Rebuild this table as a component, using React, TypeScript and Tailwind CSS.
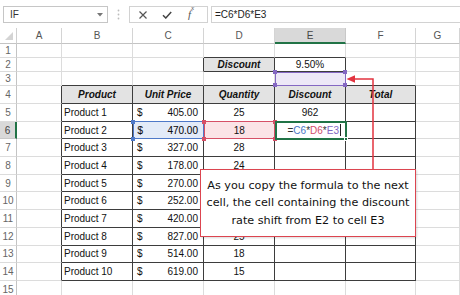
import React from "react";

const HDR = ["", "A", "B", "C", "D", "E", "F", "G"];
const prices = ["405.00", "470.00", "327.00", "178.00", "270.00", "252.00", "420.00", "827.00", "514.00", "619.00"];
const qty = ["25", "18", "28", "24", "", "", "", "25", "18", "15"];

const R_DARK = "border-r-[#3d3d3d]";
const R_LIGHT = "border-r-[#dcdcdc]";
const B_DARK = "border-b-[#3d3d3d]";
const B_LIGHT = "border-b-[#dcdcdc]";

function darkRight(r: number, c: number) {
  return (r >= 4 && r <= 14 && c >= 1 && c <= 6) || (r === 2 && c >= 3 && c <= 5);
}
function darkBottom(r: number, c: number) {
  return (r >= 3 && r <= 14 && c >= 2 && c <= 6) || ((r === 1 || r === 2) && (c === 4 || c === 5));
}

function cellContent(r: number, c: number): React.ReactNode {
  if (r === 2 && c === 4) return <span className="w-full text-center font-bold italic">Discount</span>;
  if (r === 2 && c === 5) return <span className="w-full text-center">9.50%</span>;
  if (r === 4) {
    const h: Record<number, string> = { 2: "Product", 3: "Unit Price", 4: "Quantity", 5: "Discount", 6: "Total" };
    if (h[c]) return <span className="w-full text-center font-bold italic">{h[c]}</span>;
  }
  if (r >= 5 && r <= 14) {
    const i = r - 5;
    if (c === 2) return <span className="pl-[2px]">Product {i + 1}</span>;
    if (c === 3)
      return (
        <span className="w-full flex justify-between pl-[4px] pr-[5px]">
          <span>$</span>
          <span>{prices[i]}</span>
        </span>
      );
    if (c === 4 && qty[i]) return <span className="w-full text-center">{qty[i]}</span>;
    if (c === 5 && r === 5) return <span className="w-full text-center">962</span>;
  }
  return null;
}

function Corners({ color }: { color: string }) {
  return (
    <>
      <span className={`absolute -left-[2.5px] -top-[2.5px] w-[4px] h-[4px] ${color}`} />
      <span className={`absolute -right-[2.5px] -top-[2.5px] w-[4px] h-[4px] ${color}`} />
      <span className={`absolute -left-[2.5px] -bottom-[2.5px] w-[4px] h-[4px] ${color}`} />
      <span className={`absolute -right-[2.5px] -bottom-[2.5px] w-[4px] h-[4px] ${color}`} />
    </>
  );
}

export default function App() {
  const cells: React.ReactNode[] = [];
  for (let r = 0; r <= 15; r++) {
    for (let c = 0; c <= 7; c++) {
      const key = `${r}-${c}`;
      if (r === 0) {
        if (c === 0) {
          cells.push(
            <div key={key} className="relative bg-white border-r border-b border-r-[#d0d0d0] border-b-[#c4c4c4]">
              <svg className="absolute right-[3px] bottom-[3px]" width="8" height="8">
                <path d="M8 0 L8 8 L0 8 Z" fill="#d4d4d4" />
              </svg>
            </div>
          );
        } else if (c === 5) {
          cells.push(
            <div key={key} className="flex items-center justify-center bg-[#d9d9d9] border-r border-r-[#c8c8c8] border-b-2 border-b-[#217346] text-[#444]">
              {HDR[c]}
            </div>
          );
        } else {
          cells.push(
            <div key={key} className="flex items-center justify-center bg-white border-r border-b border-r-[#d4d4d4] border-b-[#c4c4c4] text-[#555]">
              {HDR[c]}
            </div>
          );
        }
        continue;
      }
      if (c === 0) {
        if (r === 6) {
          cells.push(
            <div key={key} className="flex items-center justify-center bg-[#d9d9d9] border-b border-b-[#c8c8c8] border-r-2 border-r-[#217346] text-[#444]">
              {r}
            </div>
          );
        } else {
          cells.push(
            <div key={key} className="flex items-center justify-center bg-white border-r border-b border-r-[#c4c4c4] border-b-[#dcdcdc] text-[#666]">
              {r}
            </div>
          );
        }
        continue;
      }
      const rc = darkRight(r, c) ? R_DARK : R_LIGHT;
      const bc = darkBottom(r, c) ? B_DARK : B_LIGHT;
      const gray = (r === 4 && c >= 2 && c <= 6) || (r === 2 && c === 4);
      cells.push(
        <div
          key={key}
          className={`flex items-center overflow-visible whitespace-nowrap border-r border-b ${rc} ${bc} ${gray ? "bg-[#e3e3e3]" : "bg-white"} text-[#111]`}
        >
          {cellContent(r, c)}
        </div>
      );
    }
  }

  return (
    <div className="relative w-[460px] h-[295px] overflow-hidden bg-white font-['Liberation_Sans',Arial,sans-serif] text-[10px]">
      {/* formula bar */}
      <div className="h-[28px] flex items-start pt-[6px] bg-white">
        <div className="ml-[3px] w-[105px] h-[17px] border border-[#c6c6c6] flex items-center justify-between pl-[6px] pr-[4px]">
          <span className="text-[10px] text-[#333]">IF</span>
          <svg width="6" height="4">
            <path d="M0 0 L6 0 L3 3.5 Z" fill="#777" />
          </svg>
        </div>
        <div className="w-[21px] h-[17px] flex items-center justify-center">
          <svg width="3" height="11">
            <circle cx="1.5" cy="1.5" r="0.9" fill="#bdbdbd" />
            <circle cx="1.5" cy="5.5" r="0.9" fill="#bdbdbd" />
            <circle cx="1.5" cy="9.5" r="0.9" fill="#bdbdbd" />
          </svg>
        </div>
        <div className="w-[79px] h-[17px] border border-[#d2d2d2] flex items-center pl-[1px]">
          <span className="w-[24px] flex justify-center">
            <svg width="8" height="8">
              <path d="M0.5 0.5 L7.5 7.5 M7.5 0.5 L0.5 7.5" stroke="#555" strokeWidth="1.2" />
            </svg>
          </span>
          <span className="w-[24px] flex justify-center">
            <svg width="10" height="8">
              <path d="M1 4.2 L3.8 7 L9.2 1" stroke="#444" strokeWidth="1.5" fill="none" />
            </svg>
          </span>
          <span className="w-[24px] flex justify-center font-['Liberation_Serif',serif] italic text-[#555] text-[11px]">
            f<sub className="text-[7px]">x</sub>
          </span>
        </div>
        <div className="ml-[3px] flex-1 h-[17px] border border-r-0 border-[#d2d2d2] flex items-center pl-[3px] text-[#222]">
          =C6*D6*E3
        </div>
      </div>

      {/* grid */}
      <div className="grid grid-cols-[17px_45px_71px_71px_71px_71px_70px_44px] grid-rows-[16px_14px_14px_14px_18px_repeat(10,17.7px)_18px]">
        {cells}
      </div>

      {/* E3 reference highlight */}
      <div className="absolute left-[274.5px] top-[71.5px] w-[71px] h-[14px] border border-[#8467c2] bg-[#ebe5f6]/90">
        <Corners color="bg-[#8467c2]" />
      </div>
      {/* C6 reference highlight */}
      <div className="absolute left-[132.5px] top-[121.2px] w-[71.5px] h-[18px] border border-[#4e79c8] bg-[#dce6f6]/80 flex items-center justify-between pl-[4px] pr-[5px] text-[#111]">
        <span>$</span>
        <span>470.00</span>
        <Corners color="bg-[#4e79c8]" />
      </div>
      {/* D6 reference highlight */}
      <div className="absolute left-[203.5px] top-[121.2px] w-[71.5px] h-[18px] border border-[#d64f66] bg-[#fbe3e6] flex items-center justify-center text-[#111]">
        <span>18</span>
        <Corners color="bg-[#d64f66]" />
      </div>
      {/* E6 active cell */}
      <div className="absolute left-[274.5px] top-[120.7px] w-[72px] h-[19.5px] border-2 border-[#217346] bg-white flex items-center pl-[11px]">
        <span className="text-[#333]">=</span>
        <span className="text-[#4a78c6]">C6</span>
        <span className="text-[#333]">*</span>
        <span className="text-[#d24d6b]">D6</span>
        <span className="text-[#333]">*</span>
        <span className="text-[#8467c2]">E3</span>
        <span className="ml-[1px] w-[1px] h-[12px] bg-[#222]" />
        <span className="absolute -right-[3px] -bottom-[3px] w-[4px] h-[4px] bg-[#217346] border border-white" />
      </div>

      {/* callout */}
      <div className="absolute left-[200px] top-[169px] w-[216px] h-[68px] border-[1.5px] border-[#dc4550] bg-white flex flex-col items-center justify-center font-['DejaVu_Sans',sans-serif] text-[11.2px] leading-[17.5px] text-[#111] shadow-[1px_1px_2px_rgba(0,0,0,0.15)]">
        <span>As you copy the formula to the next</span>
        <span>cell, the cell containing the discount</span>
        <span>rate shift from E2 to cell E3</span>
      </div>

      {/* arrow */}
      <svg className="absolute left-0 top-0 pointer-events-none" width="460" height="295">
        <path d="M373 169 V79 H353" stroke="#e2333f" strokeWidth="1.5" fill="none" />
        <path d="M346.5 79 L355 75.2 L355 82.8 Z" fill="#e2333f" />
      </svg>
    </div>
  );
}
